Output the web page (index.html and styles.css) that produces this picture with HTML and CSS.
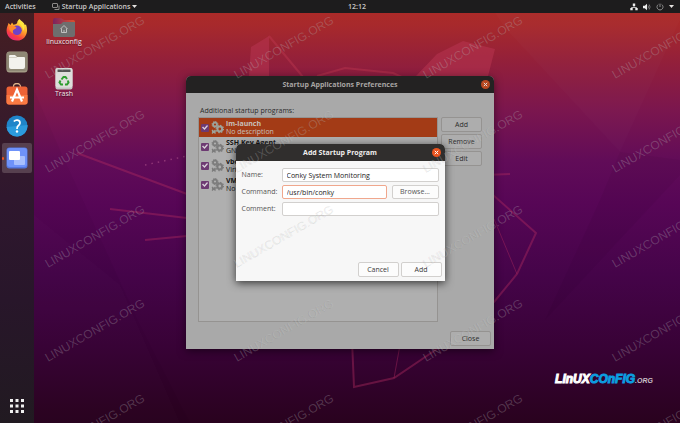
FILE: index.html
```html
<!DOCTYPE html>
<html lang="en">
<head>
<meta charset="utf-8">
<title>Startup Applications</title>
<link rel="stylesheet" href="styles.css">
</head>
<body>
<svg class="wallpaper" viewBox="0 0 680 423" preserveAspectRatio="xMidYMid slice" aria-hidden="true">
  <defs>
    <linearGradient id="sky" x1="0" y1="0" x2="0" y2="1">
      <stop offset="0" stop-color="#b02c25"/>
      <stop offset=".06" stop-color="#a7292c"/>
      <stop offset=".15" stop-color="#921f3b"/>
      <stop offset=".26" stop-color="#7b164e"/>
      <stop offset=".38" stop-color="#610c58"/>
      <stop offset=".48" stop-color="#570656"/>
      <stop offset=".65" stop-color="#450449"/>
      <stop offset=".82" stop-color="#380236"/>
      <stop offset="1" stop-color="#29021e"/>
    </linearGradient>
  </defs>
  <rect width="680" height="423" fill="url(#sky)"/>
  <path d="M505 28 620 152 680 20V13H495z" fill="#fff" opacity=".015"/>
  <path d="M34 90 60 150 140 325 190 423H34z" fill="#000" opacity=".03"/>
  <path d="M34 215 120 285 180 423 34 423z" fill="#fff" opacity=".012"/>
  <path d="M600 200 545 320 680 175V160L620 152z" fill="#000" opacity=".04"/>
  <path d="M251 47 269 36V76H249zM416 76 437 54 463 41 495 49 487 80z" fill="#b83450" opacity=".55"/>
  <g fill="none" stroke="#b02c60" stroke-opacity=".42" stroke-width="2">
    <path d="M269 36 303 77M317 76 345 68 393 73 404 78" stroke="#c03a50"/>
    <path d="M77 153 187 194M110 209 187 218M145 240 187 236M484 175 510 174M484 187 536 233 517 274 494 302M494 302 437 349 394 378 354 387 352 340"/>
    <path d="M145 165 187 156" stroke="#d070a0" stroke-dasharray="1.500 5" stroke-width="1.500"/>
    <path d="M494 219 517 274M400 345 394 378" stroke-width="1"/>
  </g>
</svg>

<header class="topbar">
  <nav class="topbar-menus">
    <button class="bar-button">Activities</button>
    <button class="bar-button">
      <svg width="8" height="8" viewBox="0 0 8 8" fill="none" stroke="#8d8a88" stroke-width="1"><rect x=".5" y=".5" width="5" height="4" rx=".5"/><path d="M7 2.500V6.500H2.500"/></svg>
      Startup Applications
      <svg width="5" height="3" viewBox="0 0 5 3"><path d="M0 0H5L2.500 3z" fill="#e4e2e0"/></svg>
    </button>
  </nav>
  <time class="clock">12:12</time>
  <button class="bar-button tray" aria-label="System menu">
    <svg width="8" height="8" viewBox="0 0 8 8"><path d="M4 1V4M1.500 7V4.500H6.500V7" fill="none" stroke="#dedede" stroke-width=".8"/><path d="M2.800.5h2.400v2.500H2.800zM.3 5h2.400v2.300H.3zM5.300 5h2.400v2.300H5.300z" fill="#eee"/></svg>
    <svg width="8" height="8" viewBox="0 0 8 8"><path d="M0 2.700H1.800L4 .8V7.200L1.800 5.300H0z" fill="#eee"/><path d="M5 2.500Q6 4 5 5.500M6.200 1.500Q8 4 6.200 6.500" fill="none" stroke="#888" stroke-width=".8"/></svg>
    <svg width="8" height="8" viewBox="0 0 8 8" fill="none" stroke="#999" stroke-width=".9"><path d="M2.400 1.400A3 3 0 1 0 5.600 1.400M4 .6V4"/></svg>
    <svg width="5" height="3" viewBox="0 0 5 3"><path d="M0 0H5L2.500 3z" fill="#e4e2e0"/></svg>
  </button>
</header>

<div class="workspace">
  <aside class="dock">
    <button class="dock-item" aria-label="Firefox">
      <svg width="22" height="22" viewBox="0 0 22 22">
        <defs><linearGradient id="fox" x1=".8" y1=".1" x2=".3" y2="1"><stop offset="0" stop-color="#fff04a"/><stop offset=".4" stop-color="#ffa42a"/><stop offset=".75" stop-color="#fb4040"/><stop offset="1" stop-color="#e52579"/></linearGradient></defs>
        <path d="M13.500 0C15 2 18.300 3.500 18.800 6L20 5.500C23 13 19.500 21.500 11 21.500 4.500 21.500.3 16.500.6 11 .8 8 2 6.500 2.500 4L4.500 6 6 3.500 7.500 5.800C9 5.500 10.500 5 11.200 4 11 2.500 12.200 1 13.500 0z" fill="url(#fox)"/>
        <circle cx="11" cy="11.300" r="4.800" fill="#7042c8"/>
        <path d="M3 8.500C5 5.500 9.500 7 10.500 9L8 10.500C6.500 11 6.500 13 7.500 14.500 4.500 13.500 3 11 3 8.500z" fill="#ff8a2b"/>
        <path d="M13 1C12 5 17.500 6 17 12 20 8 18 4 13 1z" fill="#ffe73c"/>
      </svg>
    </button>
    <button class="dock-item" aria-label="Files">
      <svg width="22" height="22" viewBox="0 0 22 22"><rect x=".5" y=".5" width="21" height="21" rx="3" fill="#a39b86"/><rect x=".5" y="1" width="21" height="19" rx="3" fill="#8f8875"/><path d="M3 5Q3 4 4 4H9L11 6H18Q19 6 19 7V16Q19 18 17 18H5Q3 18 3 16z" fill="#f3f2ed"/><path d="M3 6.500H10L11 6" stroke="#d6d2c6" fill="none"/></svg>
    </button>
    <button class="dock-item" aria-label="Ubuntu Software">
      <svg width="22" height="22" viewBox="0 0 22 22"><path d="M7.500 5V3.500A3.500 3 0 0 1 14.500 3.500V5" fill="none" stroke="#dfb389" stroke-width="1.300"/><rect x=".5" y="3.500" width="21" height="18" rx="2.500" fill="#ee6236"/><path d="M.5 12H21.500V19Q21.500 21.500 19 21.500H3Q.5 21.500.5 19z" fill="#fa7a43"/><path d="M6 18.500 11 6.500 16 18.500M4 14.500H18" fill="none" stroke="#fff" stroke-width="2.200"/></svg>
    </button>
    <button class="dock-item" aria-label="Help">
      <svg width="22" height="22" viewBox="0 0 22 22"><circle cx="11" cy="11" r="10.500" fill="#1f85c9"/><path d="M.5 12A10.500 10.500 0 0 0 21.500 10z" fill="#2c9bdd"/><path d="M7.800 6.500Q9.500 4.800 11.500 5.200 14.200 5.700 14 8.200 13.800 9.700 12.200 10.800 11 11.700 11 14" fill="none" stroke="#fff" stroke-width="1.700"/><circle cx="11" cy="16.500" r="1.200" fill="#fff"/></svg>
    </button>
    <button class="dock-item dock-item-active" aria-label="Startup Applications">
      <svg width="22" height="22" viewBox="0 0 22 22"><rect x=".5" y=".5" width="21" height="21" rx="3" fill="#5578e0"/><rect x="1" y="1" width="20" height="19" rx="3" fill="#6e92fa"/><rect x="8" y="9" width="11" height="9" rx="1" fill="#a8bffd"/><rect x="3" y="4" width="11" height="9" rx="1" fill="#fff"/></svg>
    </button>
    <button class="dock-item dock-apps" aria-label="Show Applications">
      <svg width="16" height="16" viewBox="0 0 16 16" fill="#f0f0f0"><path d="M1 1h3v3H1zM6.500 1h3v3h-3zM12 1h3v3h-3zM1 6.500h3v3H1zM6.500 6.500h3v3h-3zM12 6.500h3v3h-3zM1 12h3v3H1zM6.500 12h3v3h-3zM12 12h3v3h-3z"/></svg>
    </button>
  </aside>
  <section class="desktop">
    <button class="shortcut">
      <svg width="22" height="20" viewBox="0 0 22 20"><defs><linearGradient id="tab"><stop offset="0" stop-color="#7a2260"/><stop offset="1" stop-color="#e0502a"/></linearGradient></defs><path d="M0 3Q0 0 2 0H8L11 2H20Q22 2 22 4V10H0z" fill="url(#tab)"/><path d="M0 6H8L10 4H22V17Q22 19 20 19H2Q0 19 0 17z" fill="#6e6e6e"/><path d="M7.500 11 11 7.500 14.500 11M8.500 10.500V14.500H13.500V10.500M11 14V12" fill="none" stroke="#c0c0c0"/></svg>
      linuxconfig
    </button>
    <button class="shortcut">
      <svg width="18" height="22" viewBox="0 0 18 22"><rect x=".5" width="17" height="21.500" rx="2" fill="#c6c6c4"/><rect x=".5" width="17" height="19.500" rx="2" fill="#dededb"/><path d="M2.500 1.500H15.500V4H2.500z" fill="#555"/><g fill="none" stroke="#2e9e2f" stroke-width="2"><path d="M6.500 11.500 8.500 9H10.500L12 11"/><path d="M12.800 12.500 13.500 14.500 12 16.500H10"/><path d="M8 16.500H6L4.500 14.500 5.500 12.500"/></g></svg>
      Trash
    </button>
    <p class="brand">LInUX<span class="brand-config">COnFIG</span><span class="brand-org">.ORG</span></p>
  </section>
</div>

<main class="stage">
  <section class="window prefs" aria-labelledby="prefs-title">
    <header class="titlebar">
      <h1 class="title" id="prefs-title">Startup Applications Preferences</h1>
      <button class="close" aria-label="Close window"><svg width="9" height="9" viewBox="0 0 9 9"><path d="M2.800 2.800 6.200 6.200M6.200 2.800 2.800 6.200"/></svg></button>
    </header>
    <div class="prefs-body">
      <h2 class="list-label">Additional startup programs:</h2>
      <div class="prefs-main">
        <ul class="programs">
          <li class="program program-selected">
            <input type="checkbox" id="p1" checked>
            <svg class="gears" viewBox="0 0 13 13"><use href="#gears"/></svg>
            <label for="p1"><strong>im-launch</strong><span>No description</span></label>
          </li>
          <li class="program">
            <input type="checkbox" id="p2" checked>
            <svg class="gears" viewBox="0 0 13 13"><use href="#gears"/></svg>
            <label for="p2"><strong>SSH Key Agent</strong><span>GN</span></label>
          </li>
          <li class="program">
            <input type="checkbox" id="p3" checked>
            <svg class="gears" viewBox="0 0 13 13"><use href="#gears"/></svg>
            <label for="p3"><strong>vbo</strong><span>Virt</span></label>
          </li>
          <li class="program">
            <input type="checkbox" id="p4" checked>
            <svg class="gears" viewBox="0 0 13 13"><use href="#gears"/></svg>
            <label for="p4"><strong>VM</strong><span>No</span></label>
          </li>
        </ul>
        <div class="side-buttons">
          <button class="button">Add</button>
          <button class="button">Remove</button>
          <button class="button">Edit</button>
        </div>
      </div>
      <footer class="prefs-footer"><button class="button">Close</button></footer>
    </div>
  </section>

  <form class="window dialog" aria-labelledby="dialog-title">
    <header class="titlebar">
      <h2 class="title" id="dialog-title">Add Startup Program</h2>
      <button type="button" class="close" aria-label="Close dialog"><svg width="9" height="9" viewBox="0 0 9 9"><path d="M2.800 2.800 6.200 6.200M6.200 2.800 2.800 6.200"/></svg></button>
    </header>
    <div class="fields">
      <label for="name">Name:</label>
      <input class="field" id="name" type="text" value="Conky System Monitoring">
      <label for="command">Command:</label>
      <div class="command-row">
        <input class="field field-focus" id="command" type="text" value="/usr/bin/conky">
        <button type="button" class="button">Browse...</button>
      </div>
      <label for="comment">Comment:</label>
      <input class="field" id="comment" type="text">
    </div>
    <footer class="dialog-footer">
      <button type="button" class="button">Cancel</button>
      <button type="button" class="button">Add</button>
    </footer>
  </form>
</main>

<svg class="watermark" viewBox="0 0 680 423" preserveAspectRatio="xMidYMid slice" aria-hidden="true">
  <defs>
    <g id="gears" fill="none" stroke="currentColor">
      <circle cx="4" cy="3.500" r="2" stroke-width="1.800"/><circle cx="4" cy="3.500" r="3" stroke-width="1" stroke-dasharray="1.200 1.150"/>
      <circle cx="8.800" cy="8" r="2.400" stroke-width="2"/><circle cx="8.800" cy="8" r="3.600" stroke-width="1.300" stroke-dasharray="1.400 1.400"/>
      <path d="M1 9 4.500 12.500M4.500 9 1 12.500M1 10.700H4.800" stroke-width="1.300"/>
    </g>
  </defs>
  <g>
    <text transform="translate(48 79) rotate(-30)">LINUXCONFIG.ORG</text>
    <text transform="translate(237 79) rotate(-30)">LINUXCONFIG.ORG</text>
    <text transform="translate(426 79) rotate(-30)">LINUXCONFIG.ORG</text>
    <text transform="translate(615 79) rotate(-30)">LINUXCONFIG.ORG</text>
    <text transform="translate(48 173) rotate(-30)">LINUXCONFIG.ORG</text>
    <text transform="translate(237 173) rotate(-30)">LINUXCONFIG.ORG</text>
    <text transform="translate(426 173) rotate(-30)">LINUXCONFIG.ORG</text>
    <text transform="translate(615 173) rotate(-30)">LINUXCONFIG.ORG</text>
    <text transform="translate(48 268) rotate(-30)">LINUXCONFIG.ORG</text>
    <text transform="translate(237 268) rotate(-30)">LINUXCONFIG.ORG</text>
    <text transform="translate(426 268) rotate(-30)">LINUXCONFIG.ORG</text>
    <text transform="translate(615 268) rotate(-30)">LINUXCONFIG.ORG</text>
    <text transform="translate(48 362) rotate(-30)">LINUXCONFIG.ORG</text>
    <text transform="translate(237 362) rotate(-30)">LINUXCONFIG.ORG</text>
    <text transform="translate(426 362) rotate(-30)">LINUXCONFIG.ORG</text>
    <text transform="translate(615 362) rotate(-30)">LINUXCONFIG.ORG</text>
    <text transform="translate(48 457) rotate(-30)">LINUXCONFIG.ORG</text>
    <text transform="translate(237 457) rotate(-30)">LINUXCONFIG.ORG</text>
    <text transform="translate(426 457) rotate(-30)">LINUXCONFIG.ORG</text>
    <text transform="translate(615 457) rotate(-30)">LINUXCONFIG.ORG</text>
  </g>
</svg>
</body>
</html>
```
FILE: styles.css
```css
* {
  box-sizing: border-box;
}

html,
body {
  height: 100%;
}

body {
  margin: 0;
  display: flex;
  flex-direction: column;
  overflow: hidden;
  background: #29021e;
  color: #3a3a3a;
  font: 7px/8px "Open Sans", "Noto Sans", sans-serif;
}

button,
input {
  font: inherit;
  color: inherit;
  margin: 0;
}

button {
  border: 0;
  padding: 0;
  background: none;
}

h1,
h2,
p,
ul {
  margin: 0;
  padding: 0;
  font-size: inherit;
}

svg {
  display: block;
  flex: none;
}

.wallpaper,
.watermark {
  position: absolute;
  inset: 0;
  width: 100%;
  height: 100%;
}

.watermark {
  z-index: 3;
  pointer-events: none;
}

.watermark text {
  font: 12px "Liberation Sans", sans-serif;
  fill: rgba(200, 200, 200, 0.26);
  text-shadow: -1px 0 0 rgba(0, 0, 0, 0.22), 1px 1px 0 rgba(0, 0, 0, 0.12);
}

/* Top bar */
.topbar {
  position: relative;
  display: grid;
  grid-template-columns: 34px 1fr auto 1fr;
  align-items: center;
  height: 13px;
  background: #1d1c1d;
  color: #cbc9c7;
  font-weight: 600;
}

.topbar-menus {
  grid-column: 1 / 3;
  display: flex;
  gap: 16px;
  padding-left: 5px;
}

.bar-button {
  display: flex;
  align-items: center;
  gap: 2px;
}

.tray {
  justify-self: end;
  gap: 5px;
  padding-right: 6px;
}

/* Dock and desktop */
.workspace {
  position: relative;
  flex: 1;
  display: flex;
  min-height: 0;
}

.dock {
  width: 34px;
  display: flex;
  flex-direction: column;
  gap: 2px;
  padding: 2px;
  background: linear-gradient(#451e22, #381b2a 25%, #2f172e 45%, #28162a 70%, #211a21);
}

.dock-item {
  height: 30px;
  display: grid;
  place-items: center;
  border-radius: 2px;
}

.dock-item-active {
  position: relative;
  background: #57404f;
}

.dock-item-active::before {
  content: "";
  position: absolute;
  left: 0;
  width: 2px;
  height: 3px;
  border-radius: 1px;
  background: #e95420;
}

.dock-apps {
  margin-top: auto;
}

.desktop {
  flex: 1;
  display: flex;
  flex-direction: column;
  align-items: flex-start;
  gap: 22px;
  padding: 5px 27px 36px 12px;
}

.shortcut {
  display: flex;
  flex-direction: column;
  align-items: center;
  min-width: 36px;
  color: #f0e8ea;
  text-shadow: 0 1px 1px rgba(0, 0, 0, 0.5);
}

.brand {
  margin-top: auto;
  align-self: flex-end;
  color: #fff;
  font: italic bold 12px/12px "Liberation Sans", sans-serif;
  -webkit-text-stroke: 1px currentColor;
}

.brand-config {
  color: #0c9de0;
}

.brand-org {
  color: #c9c0c8;
  font-size: 7px;
  -webkit-text-stroke: 0;
}

/* Windows */
.stage {
  position: absolute;
  inset: 0;
  z-index: 2;
  display: grid;
  place-items: center;
  padding-top: 2px;
}

.window {
  grid-area: 1 / 1;
  border-radius: 5px 5px 0 0;
}

.titlebar {
  display: grid;
  grid-template-columns: 9px 1fr 9px;
  align-items: center;
  height: 17px;
  padding: 0 4px;
  border-radius: 5px 5px 0 0;
}

.title {
  grid-column: 2;
  text-align: center;
}

.close {
  width: 9px;
  height: 9px;
  border-radius: 50%;
}

.close path {
  fill: none;
  stroke: currentColor;
}

.button {
  height: 15px;
  min-width: 41px;
  padding: 0 6px;
  border: 1px solid #d2d0ce;
  border-radius: 2px;
  text-align: center;
  font-weight: 500;
}

.prefs {
  width: 308px;
  background: #a9a9a9;
  color: #2c2c2c;
  box-shadow: 0 2px 8px rgba(0, 0, 0, 0.5);
}

.prefs .titlebar {
  background: #232222;
  color: #a8a5a2;
}

.prefs .close {
  background: #b8481f;
  color: #ddd;
}

.prefs .button {
  border-color: #959391;
  background: #adadad;
}

.prefs-body {
  padding: 14px 3px 3px 12px;
}

.list-label {
  padding-left: 2px;
  margin-bottom: 2px;
  font-weight: 400;
}

.prefs-main {
  display: flex;
  gap: 3px;
  padding-right: 9px;
}

.programs {
  flex: 1;
  min-height: 205px;
  border: 1px solid #959391;
  background: #afafaf;
  list-style: none;
}

.program {
  display: flex;
  align-items: center;
  gap: 2px;
  height: 19px;
  padding-left: 2px;
  color: #161616;
}

.program-selected {
  background: #a33b16;
  color: #c8c0bb;
}

.program label {
  display: flex;
  flex-direction: column;
}

.program input {
  appearance: none;
  display: grid;
  place-items: center;
  width: 8px;
  height: 8px;
  border-radius: 1px;
  background: #6d3a72;
}

.program input:checked::before {
  content: "";
  width: 6px;
  height: 6px;
  background: #d9cfda;
  clip-path: polygon(0 50%, 18% 34%, 40% 58%, 84% 8%, 100% 24%, 42% 92%);
}

.gears {
  width: 13px;
  height: 13px;
  color: #7c7c7c;
}

.program-selected .gears {
  color: #9da39b;
}

.side-buttons {
  display: flex;
  flex-direction: column;
  gap: 2px;
}

.prefs-footer {
  display: flex;
  justify-content: flex-end;
  padding-top: 9px;
}

.dialog {
  width: 209px;
  background: #f7f7f7;
  box-shadow: 0 2px 8px rgba(0, 0, 0, 0.7);
}

.dialog .titlebar {
  background: #302e2d;
  color: #f0efee;
}

.dialog .close {
  background: #e95420;
  color: #fff;
}

.dialog .button {
  background: #fcfcfc;
}

.fields {
  display: grid;
  grid-template-columns: 38px 1fr;
  column-gap: 2px;
  row-gap: 3px;
  align-items: center;
  min-height: 100px;
  align-content: start;
  padding: 7px 6px 0;
  color: #555;
}

.command-row {
  display: flex;
  gap: 5px;
}

.command-row .button {
  min-width: 47px;
  height: 14px;
}

.field {
  width: 100%;
  min-width: 0;
  height: 14px;
  padding: 0 4px;
  border: 1px solid #d2d0ce;
  border-radius: 2px;
  background: #fff;
  color: #222;
  font-weight: 500;
  outline: 0;
}

.field-focus {
  border-color: #f0a78d;
}

.dialog-footer {
  display: flex;
  justify-content: flex-end;
  gap: 2px;
  padding: 1px 3px 4px;
}
```
